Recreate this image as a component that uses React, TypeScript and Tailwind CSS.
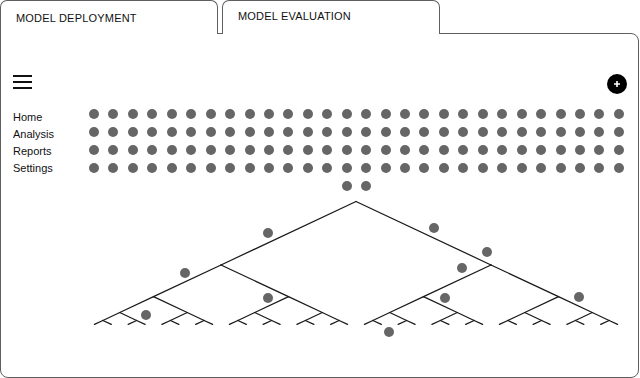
import React from "react";

type Seg = [number, number, number, number];

function buildTree(): Seg[] {
  const segs: Seg[] = [];
  const rec = (x: number, y: number, dx: number, depth: number) => {
    if (depth === 0) return;
    const dy = dx * 0.47;
    for (const s of [-1, 1]) {
      const nx = x + s * dx;
      const ny = y + dy;
      segs.push([x, y, nx, ny]);
      rec(nx, ny, dx / 2, depth - 1);
    }
  };
  rec(356, 201.5, 135, 5);
  return segs;
}

const treeSegs = buildTree();

const treeDots: [number, number][] = [
  [268, 233],
  [185, 273],
  [146, 315],
  [268, 298],
  [434, 228],
  [487, 252],
  [462, 268],
  [445, 298],
  [389, 332],
  [579, 297],
];

const menu = ["Home", "Analysis", "Reports", "Settings"];

function DotRow({ only }: { only?: number[] }) {
  return (
    <div className="flex gap-[9.45px]">
      {Array.from({ length: 28 }).map((_, i) => (
        <div
          key={i}
          className={
            !only || only.includes(i)
              ? "w-[10px] h-[10px] rounded-full bg-[#666666]"
              : "w-[10px] h-[10px] rounded-full bg-transparent"
          }
        />
      ))}
    </div>
  );
}

export default function App() {
  return (
    <div
      className="w-[640px] h-[378px] bg-white overflow-hidden text-[#111]"
      style={{ fontFamily: '"Liberation Sans", Arial, sans-serif' }}
    >
      {/* Tabs */}
      <div className="flex gap-[4px] h-[34px]">
        <div className="w-[218px] h-[34px] border border-b-0 border-[#5f5f5f] rounded-t-[7px] bg-white pl-[15px] pt-[11px] text-[11px] leading-[13px] tracking-[0.2px]">
          MODEL DEPLOYMENT
        </div>
        <div className="w-[218px] h-[34px] border border-b-0 border-[#5f5f5f] rounded-t-[7px] bg-white pl-[15px] pt-[9px] text-[11px] leading-[13px] tracking-[0.2px]">
          MODEL EVALUATION
        </div>
      </div>

      {/* Panel */}
      <div className="-mt-px w-[639px] h-[345px] border border-[#5f5f5f] rounded-b-[8px] rounded-tr-[8px] bg-white">
        <div className="mt-[40px] flex items-start justify-between pl-[12px] pr-[11px] h-[20px]">
          <div className="mt-[1px] w-[19px] h-[14px] flex flex-col justify-between">
            <div className="h-[2px] bg-[#111]" />
            <div className="h-[2px] bg-[#111]" />
            <div className="h-[2px] bg-[#111]" />
          </div>
          <div className="w-[20px] h-[20px] rounded-full bg-black flex items-center justify-center">
            <svg width="8" height="8" viewBox="0 0 8 8">
              <path d="M4 1V7M1 4H7" stroke="white" strokeWidth="1.6" />
            </svg>
          </div>
        </div>

        <div className="mt-[15px] flex items-start">
          <div className="w-[88px] pl-[12px] flex flex-col text-[11px] leading-[17px]">
            {menu.map((m) => (
              <div key={m}>{m}</div>
            ))}
          </div>
          <div className="flex flex-col gap-[8px]">
            <DotRow />
            <DotRow />
            <DotRow />
            <DotRow />
            <DotRow only={[13, 14]} />
          </div>
        </div>

        <svg
          className="block"
          width="637"
          height="150"
          viewBox="1 191 637 150"
        >
          {treeSegs.map(([x1, y1, x2, y2], i) => (
            <line
              key={i}
              x1={x1}
              y1={y1}
              x2={x2}
              y2={y2}
              stroke="#1a1a1a"
              strokeWidth="1.25"
              strokeLinecap="round"
            />
          ))}
          {treeDots.map(([cx, cy], i) => (
            <circle key={i} cx={cx} cy={cy} r="5" fill="#666666" />
          ))}
        </svg>
      </div>
    </div>
  );
}
